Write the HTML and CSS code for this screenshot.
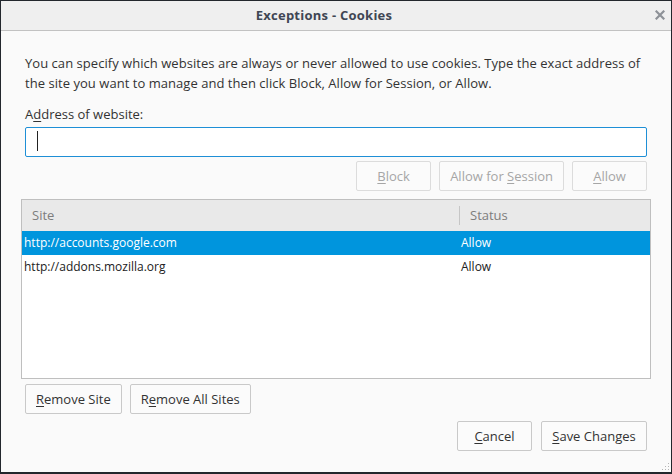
FILE: index.html
```html
<!DOCTYPE html>
<html lang="en">
<head>
<meta charset="utf-8">
<title>Exceptions - Cookies</title>
<link rel="stylesheet" href="styles.css">
</head>
<body>
<div class="dialog">
  <div class="titlebar">
    <span class="title">Exceptions - Cookies</span>
    <svg class="close" width="10" height="10" viewBox="0 0 10 10" aria-hidden="true">
      <path d="M1.5 1.5 L8.5 8.5 M8.5 1.5 L1.5 8.5" stroke="#8d9197" stroke-width="2.2" stroke-linecap="square"/>
    </svg>
  </div>
  <div class="content">
    <p class="intro">You can specify which websites are always or never allowed to use cookies. Type the exact address of the site you want to manage and then click Block, Allow for Session, or Allow.</p>
    <div class="label">A<u>d</u>dress of website:</div>
    <div class="textbox"><span class="caret"></span></div>
    <div class="row-right top-actions">
      <button class="btn" disabled><u>B</u>lock</button>
      <button class="btn" disabled>Allow for <u>S</u>ession</button>
      <button class="btn" disabled><u>A</u>llow</button>
    </div>
    <div class="table">
      <div class="thead">
        <div class="th th-site">Site</div>
        <div class="th-sep"></div>
        <div class="th th-status">Status</div>
      </div>
      <div class="tr selected">
        <div class="td">http://accounts.google.com</div>
        <div class="td td-status">Allow</div>
      </div>
      <div class="tr">
        <div class="td">http://addons.mozilla.org</div>
        <div class="td td-status">Allow</div>
      </div>
    </div>
    <div class="row-left remove-actions">
      <button class="btn btn-on"><u>R</u>emove Site</button>
      <button class="btn btn-on">R<u>e</u>move All Sites</button>
    </div>
    <div class="row-right footer">
      <button class="btn btn-on"><u>C</u>ancel</button>
      <button class="btn btn-on btn-save"><u>S</u>ave Changes</button>
    </div>
  </div>
  <svg class="grip" width="10" height="10" viewBox="0 0 10 10" aria-hidden="true">
    <g fill="#b4b4b4">
      <rect x="8" y="2" width="1" height="1"/>
      <rect x="5" y="5" width="1" height="1"/>
      <rect x="8" y="5" width="1" height="1"/>
      <rect x="2" y="8" width="1" height="1"/>
      <rect x="5" y="8" width="1" height="1"/>
      <rect x="8" y="8" width="1" height="1"/>
    </g>
  </svg>
</div>
</body>
</html>
```
FILE: styles.css
```css
html, body {
  margin: 0;
  padding: 0;
}
body {
  background: #23272d;
  width: 672px;
  height: 474px;
  overflow: hidden;
  padding-top: 1px;
  padding-left: 1px;
  box-sizing: border-box;
  font-family: "Open Sans", "Noto Sans", sans-serif;
  font-size: 13px;
  color: #333;
}
.dialog {
  position: relative;
  width: 670px;
  height: 471px;
  background: #fafafa;
  display: flex;
  flex-direction: column;
}
.titlebar {
  position: relative;
  height: 29px;
  background: #efefef;
  border-bottom: 1px solid #c2c2c2;
  display: flex;
  align-items: center;
  justify-content: center;
  padding-right: 24px;
}
.title {
  font-weight: 700;
  font-size: 13px;
  line-height: 29px;
  letter-spacing: 0.25px;
  color: #3f4654;
}
.close {
  position: absolute;
  right: 6px;
  top: 9px;
}
.content {
  padding: 22px 24px 0 24px;
  display: flex;
  flex-direction: column;
}
.intro {
  margin: 0;
  line-height: 20px;
  letter-spacing: 0.04px;
}
.label {
  margin-top: 11px;
  line-height: 20px;
}
u {
  text-decoration: underline;
  text-underline-offset: 2px;
}
.textbox {
  margin-top: 3px;
  height: 30px;
  box-sizing: border-box;
  border: 1px solid #1e8fd6;
  border-radius: 2px;
  background: #fff;
  padding: 3px 11px;
}
.caret {
  display: block;
  width: 1px;
  height: 20px;
  background: #222;
}
.row-right {
  display: flex;
  justify-content: flex-end;
  gap: 8px;
}
.row-left {
  display: flex;
  justify-content: flex-start;
  gap: 8px;
}
.top-actions {
  margin-top: 4px;
}
.btn {
  height: 30px;
  min-width: 75px;
  padding: 0 10px;
  box-sizing: border-box;
  border: 1px solid #c9c9c9;
  border-radius: 2px;
  background: #fbfbfb;
  font-family: inherit;
  font-size: 13px;
  color: #333;
  line-height: 28px;
}
.btn:disabled {
  border-color: #dcdcdc;
  color: #a6a6a6;
}
.table {
  margin: 8px -4px 0 -4px;
  height: 180px;
  box-sizing: border-box;
  border: 1px solid #bfbfbf;
  background: #fff;
}
.thead {
  height: 31px;
  background: #e9e9e9;
  display: flex;
  align-items: center;
}
.th {
  line-height: 31px;
  color: #7d7d7d;
}
.th-site {
  width: 437px;
  box-sizing: border-box;
  padding-left: 10px;
}
.th-sep {
  width: 1px;
  height: 19px;
  background: #c6c6c6;
}
.th-status {
  padding-left: 10px;
}
.tr {
  display: grid;
  grid-template-columns: 437px 1fr;
  height: 24px;
  font-size: 12px;
  line-height: 24px;
  color: #222;
}
.tr.selected {
  background: #0095dd;
  color: #fff;
}
.td {
  padding-left: 2px;
  white-space: nowrap;
}
.remove-actions {
  margin-top: 5px;
}
.footer {
  margin-top: 7px;
  gap: 9px;
}
.btn-save {
  min-width: 106px;
}
.grip {
  position: absolute;
  right: 1px;
  bottom: 1px;
}
```
